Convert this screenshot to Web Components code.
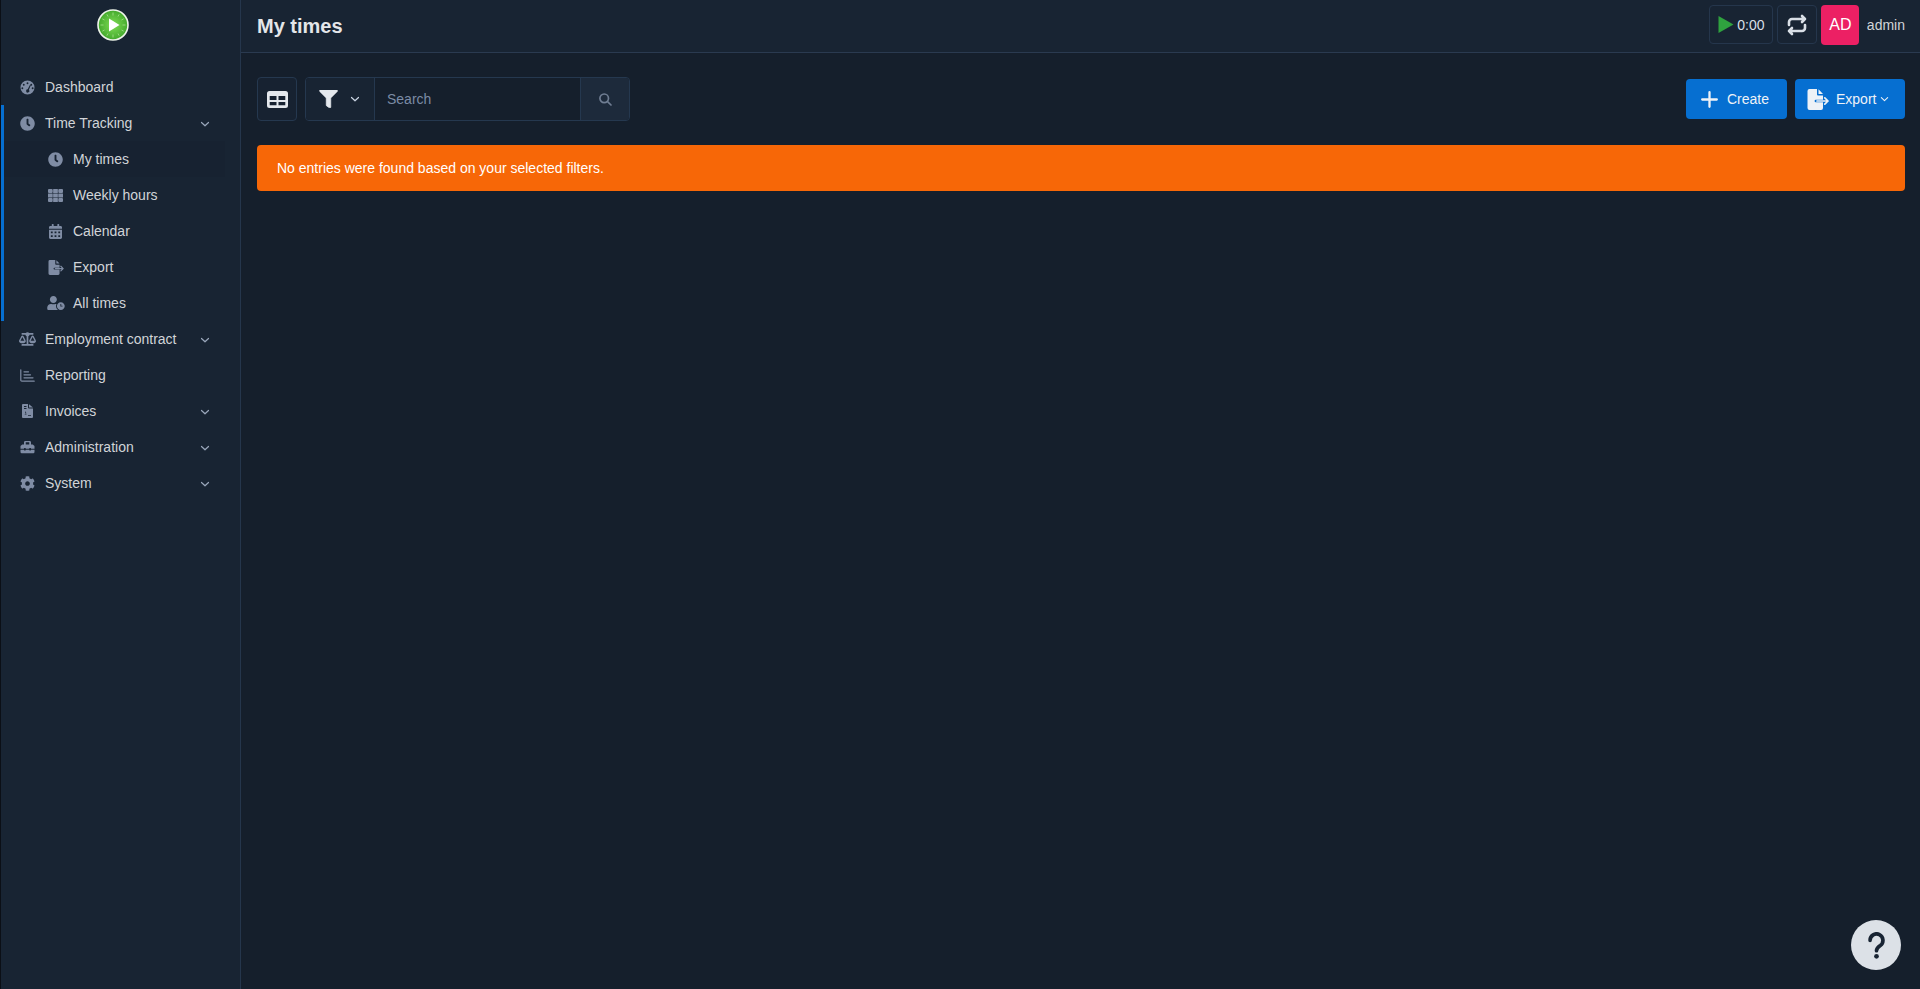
<!DOCTYPE html>
<html lang="en"><head><meta charset="utf-8"><title>My times</title>
<style>
html,body{margin:0;height:100%;background:#151f2c;font-family:"Liberation Sans",Arial,sans-serif;overflow:hidden}
</style></head><body>
<app-shell>
  <side-bar slot="side">
    <nav-item icon="gauge">Dashboard</nav-item>
    <nav-group>
      <nav-item icon="clock" caret>Time Tracking</nav-item>
      <nav-item icon="clock" sub active>My times</nav-item>
      <nav-item icon="table" sub>Weekly hours</nav-item>
      <nav-item icon="calendar" sub>Calendar</nav-item>
      <nav-item icon="export" sub>Export</nav-item>
      <nav-item icon="userclock" sub>All times</nav-item>
    </nav-group>
    <nav-item icon="scale" caret>Employment contract</nav-item>
    <nav-item icon="chart">Reporting</nav-item>
    <nav-item icon="invoice" caret>Invoices</nav-item>
    <nav-item icon="toolbox" caret>Administration</nav-item>
    <nav-item icon="cog" caret>System</nav-item>
  </side-bar>
  <top-bar slot="top">My times</top-bar>
  <tool-bar></tool-bar>
  <alert-box>No entries were found based on your selected filters.</alert-box>
  <help-button slot="over"></help-button>
</app-shell>
<script>
const I={
 clock:['0 0 512 512','<path fill="currentColor" d="M256,8C119,8,8,119,8,256S119,504,256,504,504,393,504,256,393,8,256,8Zm92.49,313h0l-20,25a16,16,0,0,1-22.49,2.5h0l-67-49.72a40,40,0,0,1-15-31.23V112a16,16,0,0,1,16-16h32a16,16,0,0,1,16,16V256l58,42.5A16,16,0,0,1,348.49,321Z"/>'],
 gauge:['0 0 512 512','<path fill="currentColor" fill-rule="evenodd" d="M256 16a240 240 0 1 0 0 480 240 240 0 0 0 0-480zM256 80a32 32 0 1 1 0 64 32 32 0 0 1 0-64zM128 128a32 32 0 1 1 0 64 32 32 0 0 1 0-64zM384 128a32 32 0 1 1 0 64 32 32 0 0 1 0-64zM432 248a32 32 0 1 1 0 64 32 32 0 0 1 0-64zM80 248a32 32 0 1 1 0 64 32 32 0 0 1 0-64zM338 170l28 14-62 150a56 56 0 1 1-42-16z"/>'],
 table:['0 0 15 13','<g fill="currentColor"><rect x="0" y="0" width="4.700" height="4.100" rx="1"/><rect x="5.150" y="0" width="4.700" height="4.100" rx=".3"/><rect x="10.300" y="0" width="4.700" height="4.100" rx="1"/><rect x="0" y="4.450" width="4.700" height="4.100" rx=".3"/><rect x="5.150" y="4.450" width="4.700" height="4.100" rx=".3"/><rect x="10.300" y="4.450" width="4.700" height="4.100" rx=".3"/><rect x="0" y="8.900" width="4.700" height="4.100" rx="1"/><rect x="5.150" y="8.900" width="4.700" height="4.100" rx=".3"/><rect x="10.300" y="8.900" width="4.700" height="4.100" rx="1"/></g>'],
 calendar:['0 0 448 512','<path fill="currentColor" d="M0 464c0 26.5 21.5 48 48 48h352c26.5 0 48-21.5 48-48V192H0v272zm320-196c0-6.6 5.4-12 12-12h40c6.6 0 12 5.4 12 12v40c0 6.6-5.4 12-12 12h-40c-6.6 0-12-5.4-12-12v-40zm0 128c0-6.6 5.4-12 12-12h40c6.6 0 12 5.4 12 12v40c0 6.6-5.4 12-12 12h-40c-6.6 0-12-5.4-12-12v-40zM192 268c0-6.6 5.4-12 12-12h40c6.6 0 12 5.4 12 12v40c0 6.6-5.4 12-12 12h-40c-6.6 0-12-5.4-12-12v-40zm0 128c0-6.6 5.4-12 12-12h40c6.6 0 12 5.4 12 12v40c0 6.6-5.4 12-12 12h-40c-6.6 0-12-5.4-12-12v-40zM64 268c0-6.6 5.4-12 12-12h40c6.6 0 12 5.4 12 12v40c0 6.6-5.4 12-12 12H76c-6.6 0-12-5.4-12-12v-40zm0 128c0-6.6 5.4-12 12-12h40c6.6 0 12 5.4 12 12v40c0 6.6-5.4 12-12 12H76c-6.6 0-12-5.4-12-12v-40zM400 64h-48V16c0-8.8-7.2-16-16-16h-32c-8.8 0-16 7.2-16 16v48H160V16c0-8.8-7.2-16-16-16h-32c-8.8 0-16 7.2-16 16v48H48C21.5 64 0 85.5 0 112v48h448v-48c0-26.5-21.5-48-48-48z"/>'],
 export:['0 0 22 21','<path fill="currentColor" d="M2.500 0H10v5.500a1 1 0 0 0 1 1h5V10.800H8.800a1.200 1.200 0 0 0 0 2.400H16V19a2 2 0 0 1-2 2H2.500a2 2 0 0 1-2-2V2a2 2 0 0 1 2-2zM11.500.3 16 5h-4.500z"/><path fill="none" stroke="currentColor" stroke-width="1.700" stroke-linecap="round" stroke-linejoin="round" d="M10 12h11m-3.200-3.200L21 12l-3.200 3.200"/>'],
 userclock:['0 0 640 512','<path fill="currentColor" d="M496 224c-79.600 0-144 64.400-144 144s64.400 144 144 144 144-64.400 144-144-64.400-144-144-144zm64 150.300c0 5.300-4.400 9.700-9.700 9.700h-60.600c-5.300 0-9.700-4.400-9.700-9.700v-76.600c0-5.300 4.400-9.700 9.700-9.700h12.600c5.300 0 9.700 4.400 9.700 9.700V352h38.300c5.300 0 9.700 4.400 9.700 9.700v12.600zM320 368c0-27.800 6.700-54.100 18.200-77.500-8-1.500-16.200-2.500-24.600-2.500h-16.700c-22.200 10.200-46.900 16-72.900 16s-50.600-5.800-72.900-16h-16.700C60.200 288 0 348.200 0 422.400V464c0 26.500 21.500 48 48 48h347.100c-45.300-31.900-75.100-84.500-75.100-144zm-96-112c70.700 0 128-57.300 128-128S294.700 0 224 0 96 57.300 96 128s57.300 128 128 128z"/>'],
 scale:['0 0 640 512','<path fill="currentColor" d="M256 336c0-16.200 1.300-8.200-85-180.800-17.600-35.300-68.200-35.300-85.900 0C-1.900 329-.100 320.300 0 336c0 44.200 57.300 80 128 80s128-35.800 128-80zM128 176l72 144H56l72-144zm511.900 160c0-16.200 1.300-8.200-85-180.800-17.600-35.300-68.200-35.300-85.900 0-87 173.800-85.100 165.100-85 180.800 0 44.200 57.300 80 128 80s127.900-35.800 127.900-80zM440 320l72-144 72 144H440zm88 128H352V153.300c23.500-10.300 41.200-31.400 46.400-57.300H528c8.800 0 16-7.200 16-16V48c0-8.800-7.200-16-16-16H383.600C369 12.600 346 0 320 0s-49 12.600-63.600 32H112c-8.800 0-16 7.200-16 16v32c0 8.800 7.200 16 16 16h129.600c5.200 25.900 22.900 47 46.400 57.300V448H112c-8.800 0-16 7.200-16 16v32c0 8.800 7.200 16 16 16h416c8.800 0 16-7.200 16-16v-32c0-8.800-7.200-16-16-16z"/>'],
 chart:['0 0 15 13','<path fill="none" stroke="currentColor" stroke-width="1.200" stroke-linecap="round" d="M.8.800v10.400a1 1 0 0 0 1 1h12.400M4 2.800h4.500M4 5.800h6.500M4 8.800h9"/>'],
 invoice:['0 0 11 14','<path fill="currentColor" fill-rule="evenodd" d="M1 0h5v3.500a1 1 0 0 0 1 1h4V13a1 1 0 0 1-1 1H1a1 1 0 0 1-1-1V1a1 1 0 0 1 1-1zM7 .2 11 3.500H7zM2 2v1h2.500V2zM2 4v1h2.500V4zM3 7.500 3 8.500 4 9 3 10 2.500 10.500h2V9.800L3.800 9.500 4.200 8zM6 11h3v.8H6z"/>'],
 toolbox:['0 0 512 512','<path fill="currentColor" d="M502.630 214.630l-45.250-45.250c-6-6-14.140-9.370-22.630-9.370H384V80c0-26.510-21.490-48-48-48H176c-26.510 0-48 21.490-48 48v80H77.250c-8.490 0-16.620 3.370-22.630 9.370L9.370 214.630c-6 6-9.370 14.140-9.370 22.630V320h128v-16c0-8.840 7.160-16 16-16h32c8.840 0 16 7.160 16 16v16h128v-16c0-8.840 7.160-16 16-16h32c8.840 0 16 7.160 16 16v16h128v-82.750c0-8.480-3.370-16.620-9.370-22.620zM320 160H192V80h128v80zm64 208c0 8.840-7.160 16-16 16h-32c-8.840 0-16-7.160-16-16v-16H192v16c0 8.840-7.160 16-16 16h-32c-8.840 0-16-7.160-16-16v-16H0v96c0 17.670 14.330 32 32 32h448c17.670 0 32-14.330 32-32v-96H384v16z"/>'],
 cog:['0 0 512 512','<path fill="currentColor" d="M487.4 315.7l-42.6-24.6c4.3-23.2 4.3-47 0-70.2l42.6-24.6c4.900-2.800 7.100-8.600 5.500-14-11.100-35.600-30-67.800-54.700-94.600-3.800-4.100-10-5.100-14.800-2.300L380.800 110c-17.900-15.400-38.500-27.300-60.800-35.100V25.800c0-5.600-3.900-10.500-9.400-11.700-36.700-8.200-74.300-7.800-109.200 0-5.500 1.200-9.400 6.100-9.400 11.700V75c-22.200 7.900-42.800 19.800-60.800 35.100L88.700 85.500c-4.900-2.800-11-1.900-14.800 2.300-24.700 26.700-43.600 58.900-54.700 94.600-1.700 5.400.6 11.200 5.500 14L67.300 221c-4.300 23.200-4.300 47 0 70.200l-42.600 24.600c-4.900 2.800-7.100 8.600-5.500 14 11.100 35.600 30 67.800 54.700 94.600 3.800 4.100 10 5.100 14.800 2.300l42.600-24.600c17.900 15.400 38.500 27.300 60.800 35.100v49.200c0 5.600 3.900 10.500 9.400 11.700 36.700 8.200 74.300 7.800 109.200 0 5.500-1.200 9.400-6.100 9.400-11.700v-49.200c22.200-7.900 42.800-19.800 60.800-35.100l42.600 24.600c4.900 2.800 11 1.900 14.800-2.300 24.700-26.700 43.600-58.900 54.700-94.600 1.500-5.500-.7-11.300-5.600-14.100zM256 336c-44.100 0-80-35.900-80-80s35.900-80 80-80 80 35.900 80 80-35.900 80-80 80z"/>'],
 filter:['0 0 512 512','<path fill="currentColor" stroke="currentColor" stroke-width="20" stroke-linejoin="round" d="M487.976 0H24.028C2.71 0-8.047 25.866 7.058 40.971L192 225.941V432c0 7.831 3.821 15.17 10.237 19.662l80 55.98C298.02 518.69 320 507.493 320 487.98V225.941l184.947-184.97C520.021 25.896 509.338 0 487.976 0z"/>'],
 search:['0 0 13 13','<path fill="none" stroke="currentColor" stroke-width="1.700" stroke-linecap="round" d="M8.800 8.800 12 12M9.500 5.300a4.300 4.300 0 1 1-8.600 0 4.300 4.300 0 0 1 8.600 0z"/>'],
 grid:['0 0 21 17','<path fill="currentColor" fill-rule="evenodd" d="M2.500 0h16A2.500 2.500 0 0 1 21 2.500v12a2.500 2.500 0 0 1-2.500 2.500h-16A2.500 2.500 0 0 1 0 14.500v-12A2.500 2.500 0 0 1 2.500 0zM2.700 5v4h6.800V5zM11.500 5v4h6.800V5zM2.700 11v3.300h6.800V11zM11.500 11v3.300h6.800V11z"/>'],
 retweet:['0 0 24 24','<path fill="none" stroke="currentColor" stroke-width="2.600" stroke-linecap="round" stroke-linejoin="round" d="M4 12V9a3 3 0 0 1 3-3h13m-3-3 3 3-3 3M20 12v3a3 3 0 0 1-3 3H4m3 3-3-3 3-3"/>'],
 plus:['0 0 17 17','<path fill="none" stroke="currentColor" stroke-width="2.300" stroke-linecap="round" d="M8.500 1.200v14.600M1.200 8.500h14.600"/>'],
 chev:['0 0 10 6','<path fill="none" stroke="currentColor" stroke-width="1.200" stroke-linecap="round" stroke-linejoin="round" d="M1.500 1.500 5 4.800l3.500-3.300"/>'],
 play:['0 0 15 17','<path fill="currentColor" d="M0 0v17l15-8.500z"/>'],
 help:['0 0 18 28','<path fill="none" stroke="currentColor" stroke-width="3.900" stroke-linecap="round" d="M2.200 8.500a6.800 6.800 0 1 1 10.800 5.500c-2.600 1.800-4 3-4 5.500"/><circle cx="9" cy="25.500" r="2.500" fill="currentColor"/>']
};
const SZ={clock:[15,15],gauge:[15,15],table:[13,15],calendar:[15,13],export:[15,16],userclock:[14,18],scale:[14,17],chart:[13,15],invoice:[14,11],toolbox:[14,15],cog:[15,15]};
customElements.define('x-icon',class extends HTMLElement{
  static get observedAttributes(){return['name','size','w']}
  constructor(){super();this.attachShadow({mode:'open'})}
  attributeChangedCallback(){this.draw()}
  connectedCallback(){this.draw()}
  draw(){
    const d=I[this.getAttribute('name')];if(!d)return;
    const s=this.getAttribute('size')||16,w=this.getAttribute('w')||s;
    this.shadowRoot.innerHTML=`<style>:host{display:inline-flex;align-items:center;justify-content:center;flex:none}svg{display:block}</style><svg viewBox="${d[0]}" width="${w}" height="${s}" aria-hidden="true">${d[1]}</svg>`;
  }
});
customElements.define('app-shell',class extends HTMLElement{constructor(){super();this.attachShadow({mode:'open'}).innerHTML=`<style>
:host{display:grid;grid-template-columns:241px 1fr;height:100vh;background:#151f2c}
main{min-width:0;display:flex;flex-direction:column}
.c{padding:24px 15px 0 16px;display:flex;flex-direction:column;gap:24px}
</style><slot name="side"></slot><main><slot name="top"></slot><div class="c"><slot></slot></div></main><slot name="over"></slot>`}});
customElements.define('side-bar',class extends HTMLElement{constructor(){super();this.attachShadow({mode:'open'}).innerHTML=`<style>
:host{display:flex;flex-direction:column;background:#182433;border-left:1px solid #0b0f16;border-right:1px solid #25364c;box-sizing:border-box;height:100vh;width:241px}
.logo{height:69px;display:flex;justify-content:center;align-items:flex-start;padding:9px 15px 0 0;box-sizing:border-box}
</style><div class="logo"><svg width="32" height="32" viewBox="0 0 32 32" aria-hidden="true"><defs><radialGradient id="g"><stop offset="0" stop-color="#7fdc55"/><stop offset="1" stop-color="#43a92c"/></radialGradient></defs><circle cx="16" cy="16" r="15" fill="url(#g)" stroke="#eef4ea" stroke-width="1.600"/><g stroke="#a8e28e" stroke-width="1" opacity=".8"><path d="M16 3.500v3M16 25.500v3M3.500 16h3M25.500 16h3M9.800 5.300l1.200 2.200M22.200 5.300l-1.200 2.200M9.800 26.700l1.200-2.200M22.200 26.700l-1.200-2.200M5.300 9.800l2.200 1.200M5.300 22.200l2.200-1.200M26.700 9.800l-2.200 1.200M26.700 22.200l-2.200-1.200"/></g><path d="M12 9.500v13l10.500-6.500z" fill="#fff"/></svg></div><slot></slot>`}});
customElements.define('nav-group',class extends HTMLElement{constructor(){super();this.attachShadow({mode:'open'}).innerHTML=`<style>
:host{display:block;border-left:3px solid #066fd1}
</style><slot></slot>`}});
customElements.define('nav-item',class extends HTMLElement{constructor(){super();
 const sub=this.hasAttribute('sub');
 const ingroup=this.parentElement&&this.parentElement.localName==='nav-group';
 const pad=sub?44:(ingroup?16:19);
 const ic=this.getAttribute('icon'),sz=SZ[ic];
 this.attachShadow({mode:'open'}).innerHTML=`<style>
:host{display:flex;height:36px;align-items:center;font-size:14px;color:#d1d4d8;box-sizing:border-box;padding-left:${pad}px;padding-right:30px;position:relative}
.bg{display:flex;align-items:center;flex:1;height:100%}
.i{width:25px;display:flex;color:#7f8ca4;flex:none}
.w{width:15px;display:flex;justify-content:center}
.t{flex:1;white-space:nowrap}
.ch{color:#9aa7bb;display:flex;margin-top:1px}
:host([active]){background:linear-gradient(#172231,#172231) no-repeat 0 0/221px 100%}
</style><div class="bg"><span class="i"><span class="w"><x-icon name="${ic}" size="${sz[0]}" w="${sz[1]}"></x-icon></span></span><span class="t"><slot></slot></span>${this.hasAttribute('caret')?'<span class="ch"><x-icon name="chev" size="6" w="10"></x-icon></span>':''}</div>`}});
customElements.define('top-bar',class extends HTMLElement{constructor(){super();this.attachShadow({mode:'open'}).innerHTML=`<style>
:host{display:flex;align-items:center;height:53px;box-sizing:border-box;background:#182433;border-bottom:1px solid #2a3a50;padding:0 15px 0 16px;color:#e4e6e9}
h1{flex:1;margin:0 0 1px;font-size:20px;font-weight:700;line-height:24px}
.r{display:flex;align-items:center;gap:4px;margin-bottom:3px}
.b{height:39px;box-sizing:border-box;border:1px solid #25364c;border-radius:4px;display:flex;align-items:center;justify-content:center;color:#d9dfe6}
.t{width:64px;font-size:14px;gap:3px}
.t x-icon{color:#2fa23f}
.x{width:40px}
.av{width:38px;height:40px;background:#ec2064;border-radius:4px;color:#fff;font-size:16px;display:flex;align-items:center;justify-content:center}
.u{font-size:14px;color:#d1d4d8;margin-left:3.500px}
</style><h1><slot></slot></h1><div class="r"><div class="b t"><x-icon name="play" size="17" w="16"></x-icon>0:00</div><div class="b x"><x-icon name="retweet" size="24" w="24"></x-icon></div><div class="av">AD</div><div class="u">admin</div></div>`}});
customElements.define('tool-bar',class extends HTMLElement{constructor(){super();this.attachShadow({mode:'open'}).innerHTML=`<style>
:host{display:flex;align-items:center;height:44px}
.sq{width:40px;height:44px;box-sizing:border-box;border:1px solid #25384f;border-radius:4px;display:flex;align-items:center;justify-content:center;color:#e4e8ed;background:#172231}
.grp{margin-left:8px;display:flex;height:44px;width:325px;box-sizing:border-box;border:1px solid #25384f;border-radius:4px;overflow:hidden}
.f{width:69px;box-sizing:border-box;border-right:1px solid #25384f;background:#182433;display:flex;align-items:center;color:#e4e8ed;padding-left:12px;gap:11px}
.f .c{color:#c8d3e1}
.s{flex:1;color:#7b8ba5;font-size:14px;display:flex;align-items:center;padding-left:12px;background:#151f2c}
.g{width:48px;background:#1d2a3b;border-left:1px solid #25384f;display:flex;align-items:center;justify-content:center;color:#6f7d92}
.sp{flex:1}
.bt{height:40px;box-sizing:border-box;background:#066fd1;border-radius:4px;color:#eef2f7;font-size:14px;display:flex;align-items:center}
.cr{width:101px;padding-left:15px;gap:9px}
.ex{width:110px;padding-left:12px;margin-left:8px;gap:7px}
.ex .c{margin-left:-3px}
</style><div class="sq"><x-icon name="grid" size="17" w="21"></x-icon></div>
<div class="grp"><div class="f"><x-icon name="filter" size="18" w="21"></x-icon><x-icon class="c" name="chev" size="6" w="10"></x-icon></div><div class="s">Search</div><div class="g"><x-icon name="search" size="13" w="13"></x-icon></div></div>
<div class="sp"></div>
<div class="bt cr"><x-icon name="plus" size="17" w="17"></x-icon>Create</div>
<div class="bt ex"><x-icon name="export" size="21" w="22"></x-icon>Export<x-icon class="c" name="chev" size="6" w="9"></x-icon></div>`}});
customElements.define('alert-box',class extends HTMLElement{constructor(){super();this.attachShadow({mode:'open'}).innerHTML=`<style>
:host{display:flex;align-items:center;height:46px;box-sizing:border-box;background:#f76707;border-radius:4px;color:#fff;font-size:14px;padding:0 20px}
</style><slot></slot>`}});
customElements.define('help-button',class extends HTMLElement{constructor(){super();this.attachShadow({mode:'open'}).innerHTML=`<style>
:host{position:fixed;right:19px;bottom:19px;width:50px;height:50px;border-radius:50%;background:#dce1e7;color:#182433;display:flex;align-items:center;justify-content:center}
</style><x-icon name="help" size="27" w="17"></x-icon>`}});
</script>
</body></html>
